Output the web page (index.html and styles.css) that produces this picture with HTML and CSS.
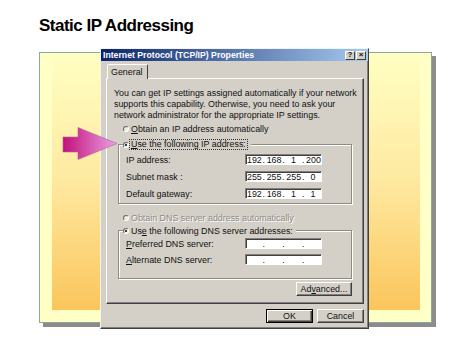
FILE: index.html
```html
<!DOCTYPE html>
<html lang="en">
<head>
  <meta charset="UTF-8">
  <title>Static IP Addressing</title>
  <link rel="stylesheet" href="styles.css">
</head>
<body>
  <div class="slide">
    <h1 class="slide-title">Static IP Addressing</h1>

    <div class="stage">
      <div class="panel"><div class="panel-fill"></div></div>

      <svg class="arrow" viewBox="0 0 56 33">
        <defs>
          <linearGradient id="arrowFill" x1="0" x2="1" y1="0" y2="0">
            <stop offset="0" stop-color="#c2107a"/>
            <stop offset="1" stop-color="#eaa2e4"/>
          </linearGradient>
        </defs>
        <polygon points="1,10 16,10 16,0.5 55,16.5 16,32.5 16,25 1,25" fill="url(#arrowFill)" stroke="#b4609c" stroke-width="0.6"/>
      </svg>

      <div class="dialog">
        <div class="titlebar">
          <span class="titlebar-text">Internet Protocol (TCP/IP) Properties</span>
          <span class="tb-btns"><span class="tb-btn">?</span><span class="tb-btn">&times;</span></span>
        </div>

        <div class="tabs"><span class="tab">General</span></div>

        <div class="tab-panel">
          <p class="intro">You can get IP settings assigned automatically if your network<br>supports this capability. Otherwise, you need to ask your<br>network administrator for the appropriate IP settings.</p>

          <div class="option"><span class="radio"></span><span><u>O</u>btain an IP address automatically</span></div>

          <div class="group">
            <div class="legend"><span class="radio checked"></span><span class="focus"><u>U</u>se the following IP address:</span></div>
            <div class="field">
              <span class="field-label">IP address:</span>
              <span class="ip"><span class="oct">192</span><span class="dot">.</span><span class="oct">168</span><span class="dot">.</span><span class="oct">1</span><span class="dot">.</span><span class="oct">200</span></span>
            </div>
            <div class="field">
              <span class="field-label">Subnet mask :</span>
              <span class="ip"><span class="oct">255</span><span class="dot">.</span><span class="oct">255</span><span class="dot">.</span><span class="oct">255</span><span class="dot">.</span><span class="oct">0</span></span>
            </div>
            <div class="field">
              <span class="field-label">Default gateway:</span>
              <span class="ip"><span class="oct">192</span><span class="dot">.</span><span class="oct">168</span><span class="dot">.</span><span class="oct">1</span><span class="dot">.</span><span class="oct">1</span></span>
            </div>
          </div>

          <div class="option disabled"><span class="radio"></span><span>Obtain DNS server address automatically</span></div>

          <div class="group dns">
            <div class="legend"><span class="radio checked"></span><span class="legend-text">Us<u>e</u> the following DNS server addresses:</span></div>
            <div class="field">
              <span class="field-label"><u>P</u>referred DNS server:</span>
              <span class="ip"><span class="oct"></span><span class="dot">.</span><span class="oct"></span><span class="dot">.</span><span class="oct"></span><span class="dot">.</span><span class="oct"></span></span>
            </div>
            <div class="field">
              <span class="field-label"><u>A</u>lternate DNS server:</span>
              <span class="ip"><span class="oct"></span><span class="dot">.</span><span class="oct"></span><span class="dot">.</span><span class="oct"></span><span class="dot">.</span><span class="oct"></span></span>
            </div>
          </div>

          <div class="actions"><button class="btn btn-wide">Ad<u>v</u>anced...</button></div>
        </div>

        <div class="footer">
          <button class="btn btn-default">OK</button>
          <button class="btn">Cancel</button>
        </div>
      </div>
    </div>
  </div>
</body>
</html>
```

FILE: styles.css
```css
/* Reset */
* {
  box-sizing: border-box;
}

body {
  margin: 0;
  background: #ffffff;
  font-family: "Liberation Sans", Arial, sans-serif;
}

.slide {
  width: 474px;
  height: 355px;
  padding: 16px 0 0 39px;
  overflow: hidden;
}

.slide-title {
  margin: 0 0 16px;
  font-size: 17px;
  line-height: 20px;
  font-weight: bold;
  letter-spacing: -0.5px;
  color: #000;
}

/* Yellow slide panel */
.stage {
  position: relative;
  width: 393px;
  height: 271px;
}

.panel {
  display: flex;
  height: 100%;
  padding: 0 11px 12px 12px;
  background: #ffffc6;
  border: 1px solid #86ab9c;
  box-shadow: 4px 4px 0 #8c8c8c;
}

.panel-fill {
  flex: 1;
  background: linear-gradient(#ffffc2, #fee9a0 50%, #fbc55c);
}

.arrow {
  position: absolute;
  left: 23px;
  top: 75px;
  width: 56px;
  height: 33px;
  z-index: 2;
}

/* Windows dialog */
.dialog {
  position: absolute;
  left: 61px;
  top: -4px;
  width: 269px;
  height: 281px;
  display: flex;
  flex-direction: column;
  background: #d4d0c8;
  border: 1px solid;
  border-color: #f4f2ee #404040 #404040 #f4f2ee;
  box-shadow: inset -1px -1px 0 #808080;
  font-size: 8.9px;
  color: #111;
}

.titlebar {
  display: flex;
  align-items: center;
  justify-content: space-between;
  height: 12px;
  padding: 0 2px;
  background: linear-gradient(90deg, #0a246a, #a6caf0);
}

.titlebar-text {
  color: #fff;
  font-weight: bold;
  font-size: 8.7px;
}

.tb-btns {
  display: flex;
  gap: 1px;
}

.tb-btn {
  display: flex;
  align-items: center;
  justify-content: center;
  width: 10px;
  height: 9px;
  background: #d4d0c8;
  border: 1px solid;
  border-color: #fff #404040 #404040 #fff;
  font-size: 8px;
  font-weight: bold;
  line-height: 1;
}

.tabs {
  display: flex;
  padding: 3px 0 0 6px;
}

.tab {
  position: relative;
  z-index: 1;
  width: 41px;
  height: 15px;
  margin-bottom: -1px;
  padding: 2px 0 0 3px;
  background: #d4d0c8;
  border: 1px solid;
  border-bottom: 0;
  border-color: #fff #404040 transparent #fff;
  border-radius: 2px 2px 0 0;
}

.tab-panel {
  height: 226px;
  margin: 0 4px 0 5px;
  border: 1px solid;
  border-color: #fff #404040 #404040 #fff;
  box-shadow: inset -1px -1px 0 #808080;
}

.intro {
  margin: 0;
  padding: 9px 0 0 7px;
  line-height: 11px;
}

.option {
  display: flex;
  align-items: center;
  gap: 2px;
  height: 11px;
  margin: 2px 0 0 16px;
}

.option.disabled {
  margin-top: 8px;
  color: #8c8a85;
  text-shadow: 1px 1px 0 #fff;
}

.radio {
  display: inline-block;
  width: 6px;
  height: 6px;
  border-radius: 50%;
  border: 1px solid;
  border-color: #6c6c6c #fff #fff #6c6c6c;
  background: #eeece8;
  position: relative;
}

.radio.checked::after {
  content: "";
  position: absolute;
  left: 1px;
  top: 1px;
  width: 2px;
  height: 2px;
  background: #000;
  border-radius: 50%;
}

/* Etched group boxes */
.group {
  display: flex;
  flex-direction: column;
  margin: 10px 11px 0;
  padding-bottom: 4px;
  border: 1px solid #8f8b84;
  box-shadow: 1px 1px 0 #fff, inset 1px 1px 0 #fff;
}

.group.dns {
  margin-top: 7px;
  padding-bottom: 13px;
}

.legend {
  display: flex;
  align-items: center;
  align-self: flex-start;
  height: 11px;
  margin: -6px 0 0 4px;
  padding-right: 3px;
  background: #d4d0c8;
}

.focus {
  padding: 0 1px;
  border: 1px dotted #333;
  line-height: 9px;
}

.legend-text {
  padding-left: 2px;
}

.field {
  display: flex;
  align-items: center;
  height: 11px;
  margin-top: 6px;
  padding-left: 7px;
}

.legend + .field {
  margin-top: 4px;
}

.dns .legend + .field {
  margin-top: 2px;
}

.dns .field {
  margin-top: 5px;
}

.field-label {
  width: 119px;
}

.ip {
  display: flex;
  align-items: center;
  width: 77px;
  height: 11px;
  padding: 0 1px;
  background: #fff;
  border: 1px solid;
  border-color: #808080 #fff #fff #808080;
  box-shadow: inset 1px 1px 0 #404040;
}

.oct {
  width: 14px;
  text-align: center;
}

.dot {
  flex: 1;
  text-align: center;
}

/* Buttons */
.actions {
  display: flex;
  justify-content: flex-end;
  margin: 3px 11px 0;
}

.btn {
  width: 47px;
  height: 14px;
  padding: 0;
  font-family: inherit;
  font-size: 8.9px;
  color: #111;
  background: #d4d0c8;
  border: 1px solid;
  border-color: #fff #404040 #404040 #fff;
  box-shadow: inset -1px -1px 0 #808080;
}

.btn-wide {
  width: 56px;
}

.btn-default {
  border-color: #000;
  box-shadow: inset 1px 1px 0 #fff, inset -1px -1px 0 #404040, inset -2px -2px 0 #808080;
}

.footer {
  display: flex;
  justify-content: flex-end;
  gap: 4px;
  margin-top: 5px;
  padding-right: 4px;
}
```
